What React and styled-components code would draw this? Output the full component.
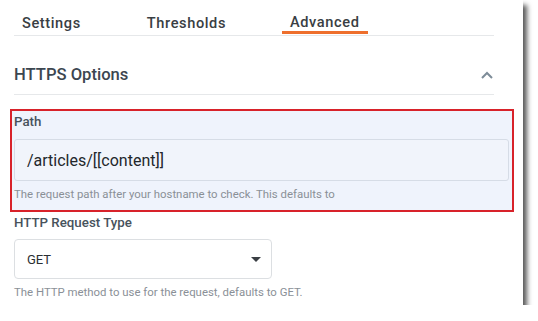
import React from 'react'
import styled, { createGlobalStyle } from 'styled-components'

const GlobalStyle = createGlobalStyle`
  body {
    margin: 0;
    background: #ffffff;
    font-family: Roboto, "Liberation Sans", Arial, sans-serif;
  }
`

const Panel = styled.div`
  width: 523px;
  height: 305px;
  box-sizing: border-box;
  background: #ffffff;
  padding: 0 29px 0 14px;
  box-shadow: 4px 5px 5px rgba(0, 0, 0, 0.65);
`

const TabBar = styled.div`
  display: flex;
  align-items: flex-end;
  gap: 50px;
  height: 35px;
  border-bottom: 1px solid #e6e8ea;
`

const Tab = styled.div`
  padding: 0 8px;
  font-size: 14.6px;
  font-weight: 500;
  letter-spacing: 0.6px;
  color: #393e43;
  line-height: 16px;
  padding-bottom: ${p => (p.$active ? '1px' : '4px')};
  margin-bottom: ${p => (p.$active ? '1px' : '0')};
  border-bottom: ${p => (p.$active ? '3px solid #ee6f2d' : '0')};
  ${p => p.$active && 'margin-left: -2px;'}
`

const SectionHeader = styled.div`
  display: flex;
  align-items: center;
  justify-content: space-between;
  height: 59px;
  padding-top: 18px;
  box-sizing: border-box;
  border-bottom: 1px solid #e6e8ea;
`

const SectionTitle = styled.div`
  font-size: 16.6px;
  font-weight: 500;
  color: #3c4650;
`

const Chevron = styled.svg`
  width: 12px;
  height: 8px;
  margin-right: 1px;
  margin-top: 1px;
`

const Highlight = styled.div`
  margin: 14px -20px 0 -4px;
  border: 2px solid #d8222a;
  background: #eff3fc;
  padding: 3px 3px 0 2px;
  height: 103px;
  box-sizing: border-box;
`

const FieldLabel = styled.div`
  font-size: 13.3px;
  font-weight: 500;
  color: #47525c;
  line-height: 16px;
`

const PathInput = styled.div`
  margin-top: 9px;
  height: 42px;
  box-sizing: border-box;
  border: 1px solid #d6dce6;
  border-radius: 3px;
  background: #f1f4fb;
  display: flex;
  align-items: center;
  padding-left: 12px;
  font-size: 16px;
  color: #23272b;
`

const Help = styled.div`
  font-size: 11.4px;
  color: #8a9097;
  margin-top: ${p => p.$top || '8px'};
  line-height: 13px;
`

const Field = styled.div`
  padding-top: 3px;
`

const Select = styled.div`
  margin-top: 8px;
  width: 258px;
  height: 40px;
  box-sizing: border-box;
  border: 1px solid #dcdfe2;
  border-radius: 4px;
  background: #ffffff;
  display: flex;
  align-items: center;
  justify-content: space-between;
  padding: 0 10px 0 12px;
  font-size: 13px;
  color: #2b2f33;
`

const Caret = styled.span`
  width: 0;
  height: 0;
  border-left: 5px solid transparent;
  border-right: 5px solid transparent;
  border-top: 5px solid #3a3f44;
  margin-top: 1px;
`

export default function App() {
  return (
    <>
      <GlobalStyle />
      <Panel>
        <TabBar>
          <Tab>Settings</Tab>
          <Tab>Thresholds</Tab>
          <Tab $active>Advanced</Tab>
        </TabBar>
        <SectionHeader>
          <SectionTitle>HTTPS Options</SectionTitle>
          <Chevron viewBox="0 0 12 8">
            <path d="M1 7 L6 2 L11 7" fill="none" stroke="#7d8c98" strokeWidth="2" />
          </Chevron>
        </SectionHeader>
        <Highlight>
          <FieldLabel>Path</FieldLabel>
          <PathInput>/articles/[[content]]</PathInput>
          <Help $top="7px">The request path after your hostname to check. This defaults to</Help>
        </Highlight>
        <Field>
          <FieldLabel>HTTP Request Type</FieldLabel>
          <Select>
            <span>GET</span>
            <Caret />
          </Select>
          <Help $top="7px">The HTTP method to use for the request, defaults to GET.</Help>
        </Field>
      </Panel>
    </>
  )
}
